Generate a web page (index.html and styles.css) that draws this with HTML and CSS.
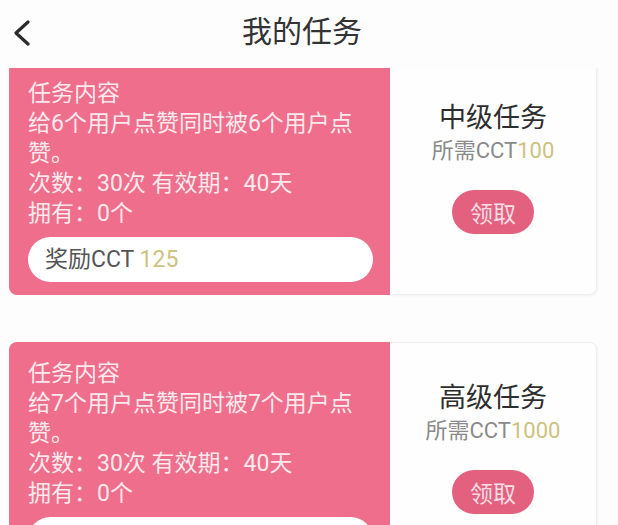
FILE: index.html
```html
<!DOCTYPE html>
<html>

<head>
	<meta charset="utf-8">
	<title>我的任务</title>
	<meta name="viewport" content="width=device-width, initial-scale=1">
	<link rel="stylesheet" href="styles.css">
</head>

<body>
	<header class='bar'>
		<svg class='bar__back' width='20' height='26' viewBox='0 0 20 26'>
			<polyline points='16,2 4,13 16,24' fill='none' stroke='#2b2b2b' stroke-width='3.2' stroke-linecap='round' stroke-linejoin='round' />
		</svg>
		<h1 class='bar__title'>我的任务</h1>
	</header>

	<section class='tasks'>
		<div class='task'>
			<div class='task__body'>
				<p>任务内容</p>
				<p>给6个用户点赞同时被6个用户点赞。</p>
				<p>次数：30次 有效期：40天</p>
				<p>拥有：0个</p>
				<div class='task__reward'>奖励CCT <span class='num'>125</span></div>
			</div>
			<div class='task__side'>
				<h2 class='task__level'>中级任务</h2>
				<p class='task__cost'>所需CCT<span class='num'>100</span></p>
				<button class='task__btn'>领取</button>
			</div>
		</div>

		<div class='task'>
			<div class='task__body'>
				<p>任务内容</p>
				<p>给7个用户点赞同时被7个用户点赞。</p>
				<p>次数：30次 有效期：40天</p>
				<p>拥有：0个</p>
				<div class='task__reward'></div>
			</div>
			<div class='task__side'>
				<h2 class='task__level'>高级任务</h2>
				<p class='task__cost'>所需CCT<span class='num'>1000</span></p>
				<button class='task__btn'>领取</button>
			</div>
		</div>
	</section>
</body>

</html>
```

FILE: styles.css
```css
/* page */

* {
	box-sizing: border-box;
}

html,
body {
	margin: 0;
	padding: 0;
	font-family: Roboto, 'Noto Sans CJK SC', sans-serif;
	background: #fdfdfd;
	color: #333;
}

body {
	height: 525px;
	overflow: hidden;
}

p,
h1,
h2 {
	margin: 0;
	font-weight: 400;
}

/* top bar */

.bar {
	position: relative;
	z-index: 1;
	height: 68px;
	display: flex;
	align-items: flex-start;
	padding: 20px 0 0 12px;
	background: #fdfdfd;
}

.bar__back {
	display: block;
}

.bar__title {
	flex: 1;
	margin-top: -6px;
	padding-right: 46px;
	text-align: center;
	font-size: 30px;
	line-height: 36px;
	color: #333;
}

/* task cards */

.tasks {
	margin-top: -6px;
	padding: 0 21px 0 9px;
	display: flex;
	flex-direction: column;
	gap: 47px;
}

.task {
	display: flex;
	height: 233px;
}

.task__body {
	width: 381px;
	padding: 17px 18px 13px 19px;
	background: #ee6e8b;
	border-radius: 8px 0 0 8px;
	color: #fde9ee;
	font-size: 23px;
	line-height: 30px;
}

.task__reward {
	margin-top: 8px;
	height: 45px;
	line-height: 45px;
	padding: 0 17px;
	width: 345px;
	background: #fff;
	border-radius: 23px;
	color: #555;
	font-size: 23px;
}

.num {
	color: #cdc27f;
}

.task__side {
	flex: 1;
	display: flex;
	flex-direction: column;
	align-items: center;
	padding-top: 40px;
	background: #fefefe;
	border: 1px solid #efefef;
	border-left: none;
	border-radius: 0 8px 8px 0;
	box-shadow: 1px 1px 3px rgba(0, 0, 0, 0.05);
}

.task__level {
	font-size: 27px;
	line-height: 30px;
	color: #2e2e2e;
}

.task__cost {
	margin-top: 5px;
	font-size: 22px;
	line-height: 26px;
	color: #8a8a8a;
}

.task__btn {
	margin-top: 26px;
	width: 82px;
	height: 44px;
	border: none;
	border-radius: 22px;
	background: #e3617e;
	color: #fbdde4;
	font-family: inherit;
	font-size: 23px;
	padding: 0;
}
```
